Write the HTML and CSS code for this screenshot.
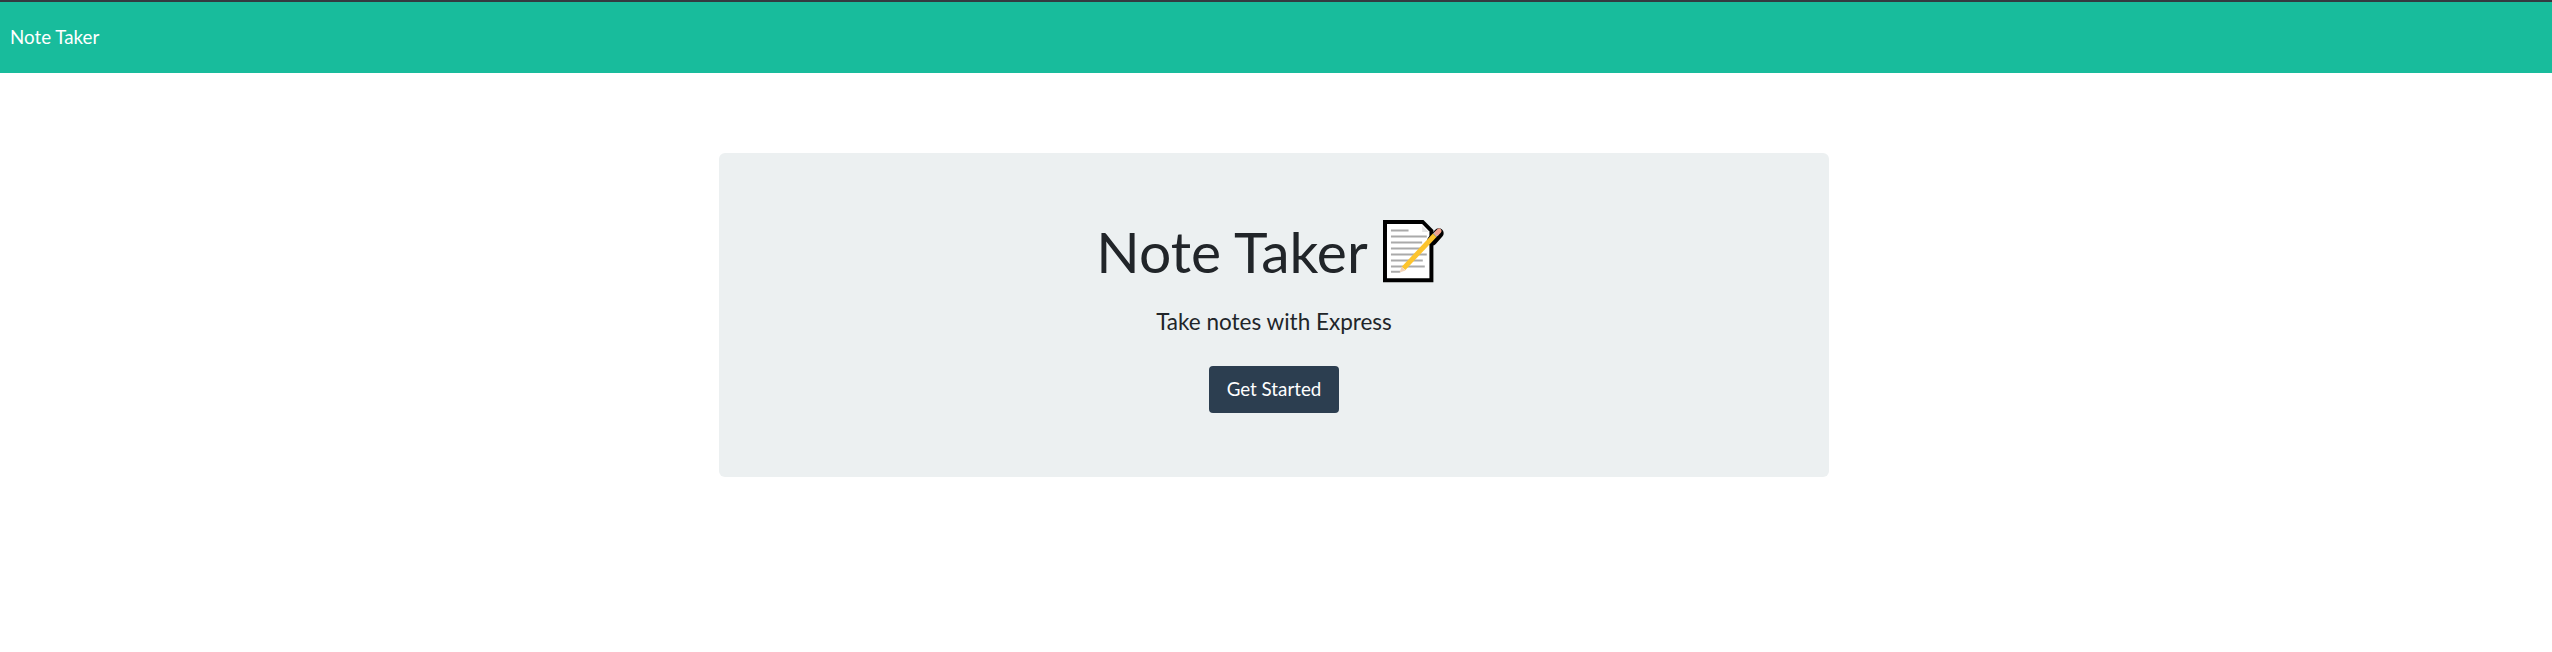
FILE: index.html

```html
<!DOCTYPE html>
<html lang="en">
<head>
    <meta charset="UTF-8">
    <meta name="viewport" content="width=device-width, initial-scale=1.0">
    <title>Note Taker</title>
    <link rel="stylesheet" href="styles.css">
</head>
<body>
    <nav class="navbar">
        <a class="navbar-brand" href="#">Note Taker</a>
    </nav>

    <div class="container">
        <div class="jumbotron">
            <h1 class="title">Note Taker
                <svg class="title-icon" viewBox="0 0 190 190" aria-hidden="true">
                    <path d="M0 0H122L152 30V188H0Z" fill="#000"/>
                    <path d="M12 12H118L140 35V176H12Z" fill="#fff"/>
                    <path d="M118 18L138 36H118Z" fill="#e6e6e6"/>
                    <path d="M24 32H77M24 50H132M24 68H118M24 86H124M24 104H132M24 122H120M24 140H126M24 156H52" stroke="#aaa" stroke-width="6" fill="none"/>
                    <path d="M148 62L168 40" stroke="#000" stroke-width="30" stroke-linecap="round" fill="none"/>
                    <path d="M62 146L156 46" stroke="#fdc42d" stroke-width="15" fill="none"/>
                    <path d="M156 46L163 39" stroke="#bbb" stroke-width="15" fill="none"/>
                    <path d="M163 39L169 33" stroke="#f0a08c" stroke-width="15" stroke-linecap="round" fill="none"/>
                    <path d="M56 140L68 152L50 158Z" fill="#f3d3b5"/>
                </svg>
            </h1>
            <p class="lead">Take notes with Express</p>
            <a class="btn" href="#">Get Started</a>
        </div>
    </div>
</body>
</html>
```

FILE: styles.css

```css
* {
    box-sizing: border-box;
}
body {
    font-family: Lato, "Liberation Sans", sans-serif;
    font-size: 15px;
    line-height: 1.5;
    margin: 0;
    background-color: #fff;
    color: #212529;
}
.navbar {
    display: flex;
    align-items: center;
    height: 73px;
    padding: 0 10px;
    background-color: #18bc9c;
    border-top: 2px solid #343a40;
}
.navbar-brand {
    color: #fff;
    font-size: 18.75px;
    text-decoration: none;
}
.container {
    width: 1140px;
    margin: 0 auto;
    padding: 80px 17px 0 13px;
}
.jumbotron {
    display: flex;
    flex-direction: column;
    align-items: center;
    height: 324px;
    padding: 62px 32px;
    background-color: #ecf0f1;
    border-radius: 6px;
}
.title {
    display: flex;
    align-items: center;
    gap: 15px;
    height: 72px;
    margin: 0;
    font-size: 57px;
    font-weight: 400;
    line-height: 72px;
}
.title-icon {
    width: 63px;
    height: 63px;
    margin-right: 6px;
}
.lead {
    margin: 20px 0 29px;
    font-size: 22.5px;
    font-weight: 400;
    line-height: 30px;
}
.btn {
    width: 130px;
    height: 47px;
    background-color: #2c3e50;
    border-radius: 4px;
    color: #fff;
    font-size: 18.75px;
    line-height: 46px;
    text-align: center;
    text-decoration: none;
}
```
